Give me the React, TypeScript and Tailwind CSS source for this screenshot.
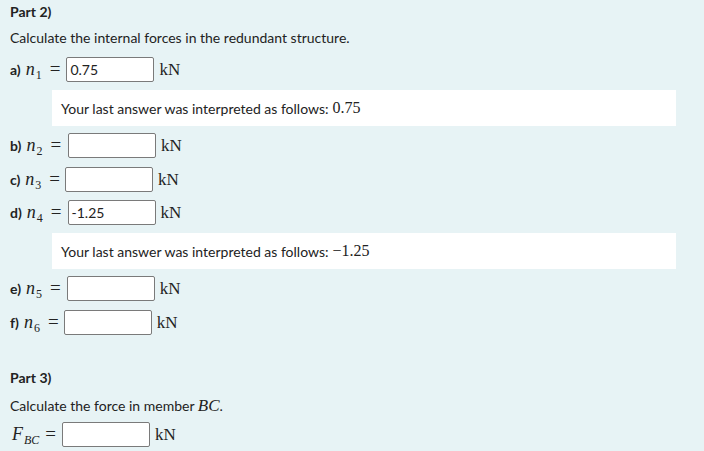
import React from "react";

const math = { fontFamily: '"Liberation Serif", "DejaVu Serif", serif' };

function Var({ base, sub, italicSub }: { base: string; sub: string; italicSub?: boolean }) {
  return (
    <span style={math} className="text-[18px] text-[#222] inline-flex items-baseline">
      <span style={math} className="italic">{base}</span>
      <span
        style={math}
        className={`text-[12px] inline-block translate-y-[4px] ml-[1px] ${italicSub ? "italic" : ""}`}
      >
        {sub}
      </span>
    </span>
  );
}

function Equals({ gap }: { gap: string }) {
  return (
    <span style={math} className={`text-[19px] ml-[8px] ${gap}`}>
      =
    </span>
  );
}

function Answer({ label, sub, value, gap }: { label: string; sub: string; value?: string; gap: string }) {
  return (
    <div className="flex items-center h-[25px]">
      <span className="font-bold text-[14px] mr-[5px]">{label}</span>
      <Var base="n" sub={sub} />
      <Equals gap={gap} />
      <div className="w-[88px] h-[25px] bg-white border border-[#7a7a7a] rounded-[2px] text-[14px] px-[3px] flex items-center">
        {value}
      </div>
      <span style={math} className="text-[17px] ml-[5px]">kN</span>
    </div>
  );
}

function Feedback({ value }: { value: string }) {
  return (
    <div className="ml-[42px] w-[624px] h-[36px] bg-white flex items-center pl-[9px] text-[14px]">
      Your last answer was interpreted as follows:{" "}
      <span style={math} className="text-[16px] ml-[4px]">{value}</span>
    </div>
  );
}

export default function App() {
  return (
    <div
      className="w-[704px] h-[451px] bg-[#e7f3f5] text-[#222] pl-[10px] pt-[1px] overflow-hidden"
      style={{ fontFamily: 'Lato, "Noto Sans", sans-serif' }}
    >
      <div className="font-bold text-[14px] h-[18px]">Part 2)</div>
      <div className="text-[14px] mt-[8px] h-[18px]">Calculate the internal forces in the redundant structure.</div>
      <div className="mt-[12px]">
        <Answer label="a)" sub="1" value="0.75" gap="mr-[6px]" />
      </div>
      <div className="mt-[8px]">
        <Feedback value="0.75" />
      </div>
      <div className="mt-[7px]">
        <Answer label="b)" sub="2" gap="mr-[7px]" />
      </div>
      <div className="mt-[9px]">
        <Answer label="c)" sub="3" gap="mr-[5px]" />
      </div>
      <div className="mt-[8px]">
        <Answer label="d)" sub="4" value="-1.25" gap="mr-[6px]" />
      </div>
      <div className="mt-[8px]">
        <Feedback value="−1.25" />
      </div>
      <div className="mt-[7px]">
        <Answer label="e)" sub="5" gap="mr-[6px]" />
      </div>
      <div className="mt-[9px]">
        <Answer label="f)" sub="6" gap="mr-[5px]" />
      </div>
      <div className="font-bold text-[14px] h-[18px] mt-[32px]">Part 3)</div>
      <div className="text-[14px] mt-[8px] h-[18px]">
        Calculate the force in member <span style={math} className="italic text-[17px]">BC</span>.
      </div>
      <div className="mt-[11px] flex items-center h-[25px]">
        <span className="ml-[2px]">
          <Var base="F" sub="BC" italicSub />
        </span>
        <span style={math} className="text-[19px] ml-[6px] mr-[6px]">=</span>
        <div className="w-[88px] h-[25px] bg-white border border-[#7a7a7a] rounded-[2px]" />
        <span style={math} className="text-[17px] ml-[5px]">kN</span>
      </div>
    </div>
  );
}
